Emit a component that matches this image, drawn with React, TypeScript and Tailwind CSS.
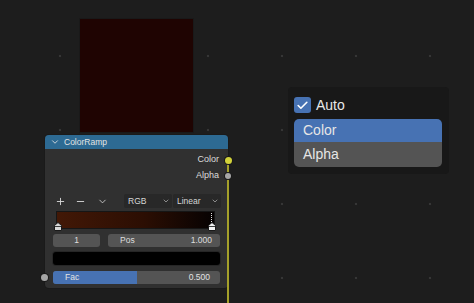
import { ChevronDown, Plus, Minus, Check } from "lucide-react"

const FONT = { fontFamily: '"Liberation Sans", Arial, sans-serif' }

function StopMarker({ active }: { active?: boolean }) {
  return (
    <svg width="8" height="9" viewBox="0 0 8 9" className="block">
      <path d="M0.5 3.5 L4 0.5 L7.5 3.5 L7.5 8.5 L0.5 8.5 Z" fill={active ? "#f2f2f2" : "#d8d8d8"} stroke="#1a1a1a" strokeWidth="1" />
      <line x1="1" y1="4.5" x2="7" y2="4.5" stroke="#3a3a3a" strokeWidth="1" />
    </svg>
  )
}

function Dropdown({ label }: { label: string }) {
  return (
    <div className="flex h-full flex-1 items-center justify-between rounded-[2px] bg-[#282828] pl-[4px] pr-[2px] text-[8.5px] text-[#d6d6d6]">
      <span>{label}</span>
      <ChevronDown size={8} strokeWidth={2} className="text-[#bdbdbd]" />
    </div>
  )
}

function ColorRampNode() {
  return (
    <div className="absolute left-[45px] top-[135px] flex w-[183px] flex-col rounded-[4px] bg-[#303030] shadow-[0_0_0_1px_#1a1a1a]" style={FONT}>
      <div className="flex h-[14px] items-center gap-[4px] rounded-t-[4px] bg-[#2d6a93] pl-[5px] text-[8.5px] text-[#e4e4e4]">
        <ChevronDown size={10} strokeWidth={2} />
        <span>ColorRamp</span>
      </div>

      <div className="mt-[3px] flex h-[16px] items-center justify-end pr-[9px] text-[9px] text-[#dcdcdc]">Color</div>
      <div className="flex h-[16px] items-center justify-end pr-[9px] text-[9px] text-[#dcdcdc]">Alpha</div>

      <div className="mt-[10px] flex h-[14px] items-center pl-[10px] pr-[7px] text-[#d8d8d8]">
        <Plus size={11} strokeWidth={2} />
        <Minus size={11} strokeWidth={2} className="ml-[9px]" />
        <ChevronDown size={11} strokeWidth={1.8} className="ml-[11px]" />
        <div className="ml-[16px] flex h-full flex-1 gap-[1px]">
          <Dropdown label="RGB" />
          <Dropdown label="Linear" />
        </div>
      </div>

      <div className="relative ml-[12px] mr-[14px] mt-[4px] h-[16px]">
        <div className="h-full w-full bg-[linear-gradient(to_right,#421806,#2c0e03_55%,#060202)] shadow-[0_0_0_1px_#161616]" />
        <div className="absolute -left-[3px] top-[10px]"><StopMarker /></div>
        <div className="absolute right-[2px] top-[1px] h-[9px] border-l border-dotted border-[#e0e0e0]" />
        <div className="absolute -right-[2px] top-[10px]"><StopMarker active /></div>
      </div>

      <div className="mt-[6px] flex h-[13px] gap-[8px] px-[8px] text-[8.5px] text-[#dedede]">
        <div className="flex w-[47px] items-center justify-center rounded-[3px] bg-[#545454]">1</div>
        <div className="flex flex-1 items-center justify-between rounded-[3px] bg-[#545454] pl-[12px] pr-[8px]">
          <span>Pos</span>
          <span>1.000</span>
        </div>
      </div>

      <div className="mx-[8px] mt-[5px] h-[13px] rounded-[3px] bg-black shadow-[0_0_0_1px_#262626]" />

      <div className="mx-[8px] mt-[6px] flex h-[13px] overflow-hidden rounded-[3px] bg-[#545454] text-[8.5px] text-[#e2e2e2]">
        <div className="flex w-1/2 items-center bg-[#4772b3] pl-[12px]">Fac</div>
        <div className="flex flex-1 items-center justify-end pr-[10px]">0.500</div>
      </div>

      <div className="mb-[4px]" />

      <div className="absolute -left-[4px] top-[138.5px] h-[7px] w-[7px] rounded-full bg-[#a6a6a6] shadow-[0_0_0_1px_#1a1a1a]" />
    </div>
  )
}

function ChannelMenu() {
  return (
    <div className="absolute left-[288px] top-[87px] w-[161px] rounded-[4px] bg-[#181818] pb-[7px] pl-[6px] pr-[7px] pt-[10px]" style={FONT}>
      <div className="flex h-[16px] items-center gap-[5px]">
        <div className="flex h-[16px] w-[17px] items-center justify-center rounded-[3px] bg-[#4772b3]">
          <Check size={13} strokeWidth={3} className="text-white" />
        </div>
        <span className="text-[14px] text-[#e8e8e8]">Auto</span>
      </div>
      <div className="mt-[6px] overflow-hidden rounded-[5px] text-[14px] text-[#e6e6e6]">
        <div className="flex h-[23px] items-center bg-[#4772b3] pl-[9px]">Color</div>
        <div className="flex h-[25px] items-center bg-[#545454] pl-[9px]">Alpha</div>
      </div>
    </div>
  )
}

export default function App() {
  return (
    <div className="relative h-[303px] w-[474px] overflow-hidden bg-[#1d1d1d] bg-[radial-gradient(circle,#363636_1px,transparent_1.6px)] bg-[length:74px_74px] bg-[position:23px_19px]">
      {/* node preview */}
      <div className="absolute left-[80px] top-[19px] h-[113px] w-[113px] bg-[#1f0402] shadow-[0_0_0_1px_#191919]" />

      <ColorRampNode />

      {/* link from Color output, drawn over the node edge; sockets sit on top */}
      <div className="absolute left-[227px] top-[160px] h-[150px] w-[2px] bg-[#a4a02a]" />
      <div className="absolute left-[224.5px] top-[156.5px] h-[7px] w-[7px] rounded-full bg-[#d2d23a] shadow-[0_0_0_1px_#1a1a1a]" />
      <div className="absolute left-[225px] top-[173px] h-[6px] w-[6px] rounded-full bg-[#a6a6a6] shadow-[0_0_0_1px_#1a1a1a]" />

      <ChannelMenu />
    </div>
  )
}
